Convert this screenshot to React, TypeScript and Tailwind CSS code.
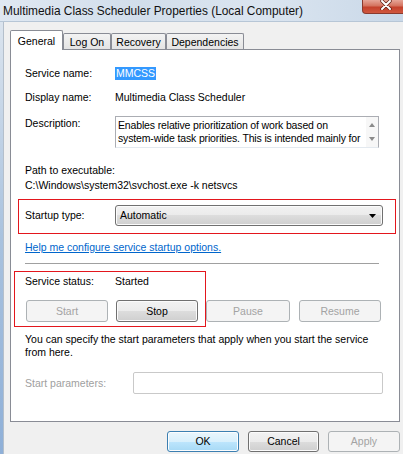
import React from 'react';

function WinButton({ label, width, disabled, primary }: { label: string; width: string; disabled?: boolean; primary?: boolean }) {
    // Windows 7 style push button
    let look = 'border-[#707070] bg-[linear-gradient(#f2f2f2_0%,#ebebeb_50%,#dddddd_50%,#cfcfcf_100%)] text-black shadow-[inset_0_0_0_1px_#fbfbfb]';
    if (disabled) look = 'border-[#adb2b5] bg-[#f4f4f4] text-[#a3a3a3]';
    if (primary) look = 'border-[#3c7fb1] bg-[linear-gradient(#eaf6fd_0%,#d9f0fc_50%,#bee6fd_50%,#a7d9f5_100%)] text-black shadow-[inset_0_0_0_1px_#fcfdfe]';
    return (
        <div className={`flex h-full items-center justify-center rounded-[3px] border ${look} ${width}`}>
            {label}
        </div>
    );
}

export default function App() {
    return (
        <div className="relative flex h-[454px] w-[403px] flex-col overflow-hidden bg-[#f0f0f0] font-[family-name:'Liberation_Sans',Arial,sans-serif] text-[10.5px] leading-[13px] text-black">
            {/* Title bar */}
            <div className="flex h-[21px] shrink-0 items-start justify-between bg-[linear-gradient(90deg,#dfe8f2_0%,#d2deeb_35%,#dbe5f0_65%,#c9d8e8_100%)]">
                <span className="pl-[3px] pt-[4px] text-[11.9px] leading-[15px] text-[#111]">
                    Multimedia Class Scheduler Properties (Local Computer)
                </span>
                <div className="mr-[-6px] flex h-[14px] w-[47px] items-center justify-center rounded-b-[4px] border border-t-0 border-[#8a3a2e] bg-[linear-gradient(#e6a597_0%,#d4735f_45%,#c4412c_55%,#d0583f_100%)]">
                    <svg width="12" height="10" viewBox="0 0 12 10" className="-mt-[3px]">
                        <path d="M2 1 L10 9 M10 1 L2 9" stroke="#5a1d14" strokeWidth="3.4" strokeLinecap="round" />
                        <path d="M2 1 L10 9 M10 1 L2 9" stroke="#ffffff" strokeWidth="2" strokeLinecap="round" />
                    </svg>
                </div>
            </div>

            {/* Window body */}
            <div className="flex flex-1 border-t border-[#b7c6d6]">
                <div className="w-[3px] shrink-0 bg-[linear-gradient(#dbe4ee,#a9c2de_50%,#8fb0d8)]" />
                <div className="flex-1 border-l border-[#b4bfcb] pl-[6px] pt-[8px]">
                    {/* Tabs */}
                    <div className="flex h-[19px] items-end">
                        <div className="relative z-10 -mb-px flex h-[20px] w-[53px] items-center justify-center rounded-t-[2px] border border-b-0 border-[#898c95] bg-white pt-[2px]">
                            General
                        </div>
                        <div className="flex h-[16px] w-[48px] items-center justify-center rounded-t-[2px] border border-b-0 border-[#898c95] bg-[linear-gradient(#f3f3f3,#e4e4e4)] pt-[2px]">
                            Log On
                        </div>
                        <div className="flex h-[16px] w-[55px] items-center justify-center rounded-t-[2px] border border-b-0 border-[#898c95] bg-[linear-gradient(#f3f3f3,#e4e4e4)] pt-[2px]">
                            Recovery
                        </div>
                        <div className="flex h-[16px] w-[78px] items-center justify-center rounded-t-[2px] border border-b-0 border-[#898c95] bg-[linear-gradient(#f3f3f3,#e4e4e4)] pt-[2px]">
                            Dependencies
                        </div>
                    </div>

                    {/* Tab panel */}
                    <div className="h-[373px] w-[390px] border border-[#898c95] bg-white pt-[17px]">
                        <div className="flex pl-[14px]">
                            <span className="w-[90px]">Service name:</span>
                            <span className="bg-[#3399ff] px-px text-white">MMCSS</span>
                        </div>
                        <div className="mt-[11px] flex pl-[14px]">
                            <span className="w-[90px]">Display name:</span>
                            <span>Multimedia Class Scheduler</span>
                        </div>
                        <div className="mt-[12px] flex items-start pl-[14px]">
                            <span className="w-[90px] pt-px">Description:</span>
                            <div className="flex h-[32px] w-[264px] border border-[#abadb3] border-b-[#e3e9ef]">
                                <div className="flex-1 overflow-hidden pl-[2px] pt-[2px] tracking-[-0.15px] whitespace-nowrap">
                                    <div>Enables relative prioritization of work based on</div>
                                    <div>system-wide task priorities. This is intended mainly for</div>
                                </div>
                                <div className="flex w-[12px] shrink-0 flex-col items-center justify-between bg-[#f7f7f7] py-[6px]">
                                    <svg width="6" height="4" viewBox="0 0 6 4"><path d="M0 4 L3 0 L6 4 Z" fill="#8a8a8a" /></svg>
                                    <svg width="6" height="4" viewBox="0 0 6 4"><path d="M0 0 L3 4 L6 0 Z" fill="#8a8a8a" /></svg>
                                </div>
                            </div>
                        </div>
                        <div className="mt-[16px] pl-[14px]">Path to executable:</div>
                        <div className="mt-[2px] pl-[14px]">C:\Windows\system32\svchost.exe -k netsvcs</div>

                        <div className="mt-[13px] flex h-[21px] items-center pl-[14px]">
                            <span className="w-[90px]">Startup type:</span>
                            <div className="flex h-full w-[268px] items-center justify-between rounded-[3px] border border-[#707070] bg-[linear-gradient(#f2f2f2_0%,#ebebeb_50%,#dddddd_50%,#cfcfcf_100%)] pl-[4px] pr-[6px] shadow-[inset_0_0_0_1px_#fbfbfb]">
                                <span>Automatic</span>
                                <svg width="7" height="4" viewBox="0 0 7 4"><path d="M0 0 L7 0 L3.5 4 Z" fill="#000" /></svg>
                            </div>
                        </div>

                        <div className="mt-[15px] pl-[14px]">
                            <span className="text-[#0066cc] underline">Help me configure service startup options.</span>
                        </div>
                        <div className="ml-[14px] mt-[9px] h-px w-[354px] bg-[#a0a0a0]" />

                        <div className="mt-[11px] flex pl-[14px]">
                            <span className="w-[90px]">Service status:</span>
                            <span>Started</span>
                        </div>
                        <div className="mt-[12px] flex h-[22px] pl-[15px]">
                            <WinButton label="Start" width="w-[82px]" disabled />
                            <div className="ml-[8px] h-full"><WinButton label="Stop" width="w-[82px]" /></div>
                            <div className="ml-[8px] h-full"><WinButton label="Pause" width="w-[84px]" disabled /></div>
                            <div className="ml-[9px] h-full"><WinButton label="Resume" width="w-[82px]" disabled /></div>
                        </div>

                        <p className="mt-[11px] pl-[14px]">
                            You can specify the start parameters that apply when you start the service
                            <br />
                            from here.
                        </p>

                        <div className="mt-[13px] flex h-[22px] items-center pl-[14px]">
                            <span className="w-[108px] text-[#a0a0a0]">Start parameters:</span>
                            <div className="h-full w-[250px] rounded-[2px] border border-[#c9c9c9] bg-white" />
                        </div>
                    </div>

                    {/* Dialog buttons */}
                    <div className="mt-[9px] flex h-[21px] w-[390px] justify-end gap-[9px]">
                        <WinButton label="OK" width="w-[72px]" primary />
                        <WinButton label="Cancel" width="w-[71px]" />
                        <WinButton label="Apply" width="w-[72px]" disabled />
                    </div>
                </div>
            </div>

            {/* Red annotation boxes drawn over the dialog */}
            <div className="pointer-events-none absolute left-[18px] top-[199px] h-[35px] w-[378px] border border-[#e3161d]" />
            <div className="pointer-events-none absolute left-[14px] top-[271px] h-[56px] w-[192px] border border-[#e3161d]" />
        </div>
    );
}
